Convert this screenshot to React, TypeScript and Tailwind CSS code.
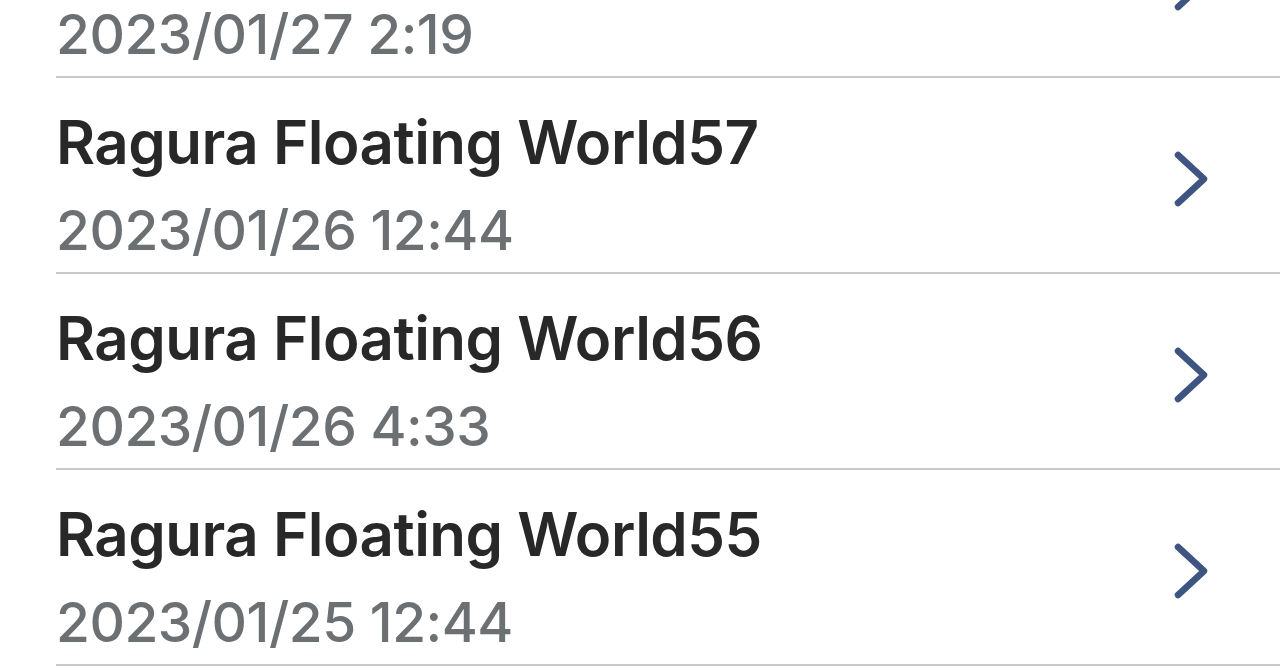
import React from 'react';

interface Entry {
  title: string;
  date: string;
}

const entries: Entry[] = [
  { title: 'Ragura Floating World58', date: '2023/01/27 2:19' },
  { title: 'Ragura Floating World57', date: '2023/01/26 12:44' },
  { title: 'Ragura Floating World56', date: '2023/01/26 4:33' },
  { title: 'Ragura Floating World55', date: '2023/01/25 12:44' },
];

const Chevron: React.FC = () => (
  <svg width="42" height="64" viewBox="0 0 42 64" fill="none" className="shrink-0 mt-2">
    <path
      d="M8 8 L34 32 L8 56"
      stroke="#3d5580"
      strokeWidth="6.5"
      strokeLinecap="round"
      strokeLinejoin="round"
    />
  </svg>
);

const Row: React.FC<{ entry: Entry }> = ({ entry }) => (
  <div className="flex items-center h-[196px] border-b-2 border-[#c8c9cc] pr-[68px]">
    <div className="flex-1 self-start pt-[34px]">
      <div className="text-[60px] leading-none font-semibold text-[#282828] tracking-[-0.5px] whitespace-nowrap">
        {entry.title}
      </div>
      <div className="text-[55px] leading-none font-medium text-[#6c7073] mt-[31px] tracking-[-0.5px] whitespace-nowrap">
        {entry.date}
      </div>
    </div>
    <Chevron />
  </div>
);

export default function App() {
  return (
    <div
      className="w-[1280px] h-[670px] overflow-hidden bg-white"
      style={{ fontFamily: 'Inter, "Noto Sans", sans-serif' }}
    >
      <div className="-mt-[118px] ml-[56px]">
        {entries.map((e) => (
          <Row key={e.title} entry={e} />
        ))}
      </div>
    </div>
  );
}
